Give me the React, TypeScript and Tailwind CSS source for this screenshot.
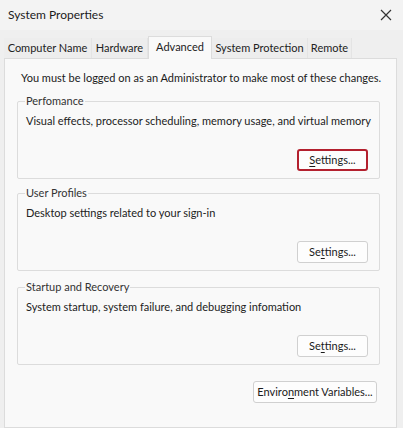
const tabs = [
  { t: "Computer Name", w: "w-[88px]" },
  { t: "Hardware", w: "w-[56px]" },
  { t: "Advanced", w: "w-[64px]" },
  { t: "System Protection", w: "w-[96px]" },
  { t: "Remote", w: "w-[44px]" },
];

const Button = ({
  label,
  u,
  w,
  focused,
}: {
  label: string;
  u: number;
  w: string;
  focused?: boolean;
}) => (
  <button
    className={
      "h-[22px] rounded-[3px] bg-[#fdfdfd] text-[11px] text-[#1a1a1a] whitespace-nowrap flex items-center justify-center " +
      w +
      " " +
      (focused ? "border-2 border-[#b3202e]" : "border border-[#d0d0d0]")
    }
  >
    {label.slice(0, u)}
    <span className="underline underline-offset-2">{label[u]}</span>
    {label.slice(u + 1)}
  </button>
);

const Section = ({
  title,
  desc,
  u,
  focused,
  extra = "",
}: {
  title: string;
  desc: string;
  u: number;
  focused?: boolean;
  extra?: string;
}) => (
  <fieldset
    className={
      "border border-[#dcdcdc] rounded-[2px] pl-[8px] pr-[11px] pb-[7px] pt-0 ml-[12px] mr-[16px] min-w-0 " + extra
    }
  >
    <legend className="px-[1px] ml-[-1px] text-[11px] text-[#333] leading-[16px] whitespace-nowrap">{title}</legend>
    <div className="text-[11px] text-[#222] leading-[16px] mt-[4px] whitespace-nowrap">{desc}</div>
    <div className="flex justify-end mt-[20px]">
      <Button label="Settings..." u={u} w="w-[71px]" focused={focused} />
    </div>
  </fieldset>
);

export default function App() {
  return (
    <div
      className="w-[403px] h-[428px] bg-[#efefef] overflow-hidden flex flex-col"
      style={{ fontFamily: 'Lato, "Noto Sans", sans-serif' }}
    >
      <div className="h-[30px] bg-[#f3f3f3] flex items-center justify-between pl-[8px] pr-[11px]">
        <span className="text-[12px] text-[#1b1b1b]">System Properties</span>
        <svg width="12" height="12" viewBox="0 0 12 12" className="text-[#333]">
          <path d="M1 1 L11 11 M11 1 L1 11" stroke="currentColor" strokeWidth="1.2" />
        </svg>
      </div>
      <div className="flex pl-[4px] mt-[7px] h-[21px] items-end">
        {tabs.map(({ t, w }) => (
          <div
            key={t}
            className={
              "text-[11px] text-[#222] whitespace-nowrap text-center " +
              w +
              " " +
              (t === "Advanced"
                ? "h-[23px] bg-[#f9f9f9] border border-b-0 border-[#dcdcdc] relative top-[1px] leading-[19px]"
                : "h-[20px] leading-[20px] bg-[#ededed] border-r border-[#e4e4e4]")
            }
          >
            {t}
          </div>
        ))}
      </div>
      <div className="flex-1 ml-[4px] mr-[6px] bg-[#f9f9f9] border border-[#dcdcdc] pt-[11px] flex flex-col">
        <div className="text-[11px] text-[#1a1a1a] px-[16px] leading-[16px] whitespace-nowrap mb-[7px]">
          You must be logged on as an Administrator to make most of these changes.
        </div>
        <div className="flex flex-col gap-[6px]">
          <Section
            title="Perfomance"
            desc="Visual effects, processor scheduling, memory usage, and virtual memory"
            u={0}
            focused
          />
          <Section title="User Profiles" desc="Desktop settings related to your sign-in" u={2} />
          <Section
            title="Startup and Recovery"
            desc="System startup, system failure, and debugging infomation"
            u={2}
            extra="mt-[2px]"
          />
        </div>
        <div className="flex justify-end pr-[19px] mt-[16px]">
          <Button label="Environment Variables..." u={6} w="w-[124px]" />
        </div>
      </div>
    </div>
  );
}
